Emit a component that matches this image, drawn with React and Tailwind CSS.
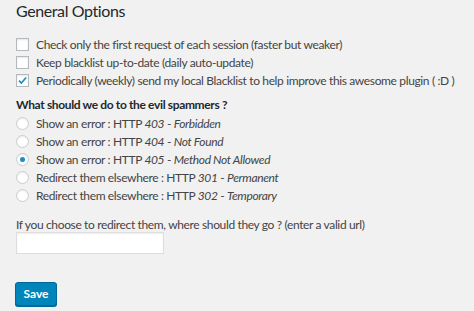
import { useState } from "react";

const checks = [
  { label: "Check only the first request of each session (faster but weaker)", on: false },
  { label: "Keep blacklist up-to-date (daily auto-update)", on: false },
  { label: "Periodically (weekly) send my local Blacklist to help improve this awesome plugin ( :D )", on: true },
];

const actions = [
  { text: "Show an error : HTTP", code: "403", desc: "Forbidden" },
  { text: "Show an error : HTTP", code: "404", desc: "Not Found" },
  { text: "Show an error : HTTP", code: "405", desc: "Method Not Allowed" },
  { text: "Redirect them elsewhere : HTTP", code: "301", desc: "Permanent" },
  { text: "Redirect them elsewhere : HTTP", code: "302", desc: "Temporary" },
];

export default function App() {
  const [picked, setPicked] = useState(2);

  return (
    <div
      className="w-[474px] h-[311px] bg-[#f1f1f1] text-[#444] px-4 overflow-hidden tracking-[-0.36px]"
      style={{ fontFamily: 'Lato, "Open Sans", sans-serif' }}
    >
      {/* Heading */}
      <h2 className="text-[16px] leading-[22px] font-normal text-[#23282d] tracking-[-0.4px]">General Options</h2>

      {/* Checkboxes */}
      <div className="mt-[16px] flex flex-col gap-[5px]">
        {checks.map((c, i) => (
          <label key={i} className="flex items-center h-[13px] text-[12px] whitespace-nowrap">
            <span className="w-[13px] h-[13px] bg-white border border-[#b4b9be] shadow-[inset_0_1px_2px_rgba(0,0,0,0.1)] flex items-center justify-center shrink-0 mr-[7px]">
              {c.on && (
                <svg viewBox="0 0 12 12" className="w-[11px] h-[11px]">
                  <path d="M2.2 6.2 L4.8 8.8 L10 2.8" fill="none" stroke="#1e8cbe" strokeWidth="1.8" />
                </svg>
              )}
            </span>
            <span>{c.label}</span>
          </label>
        ))}
      </div>

      {/* Radios */}
      <p className="mt-[10px] h-[16px] text-[12px] font-bold text-[#23282d] leading-[16px]">
        What should we do to the evil spammers ?
      </p>
      <div className="mt-[4px] flex flex-col gap-[5px]">
        {actions.map((a, i) => (
          <label
            key={i}
            onClick={() => setPicked(i)}
            className="flex items-center h-[13px] text-[12px] whitespace-nowrap"
          >
            <span className="w-[13px] h-[13px] rounded-full bg-white border border-[#c9cdd1] shadow-[inset_0_1px_2px_rgba(0,0,0,0.08)] flex items-center justify-center shrink-0 mr-[7px]">
              {picked === i && <span className="w-[5px] h-[5px] rounded-full bg-[#1e8cbe]" />}
            </span>
            <span>
              {a.text} <em>{a.code}</em> - <em>{a.desc}</em>
            </span>
          </label>
        ))}
      </div>

      {/* Redirect url */}
      <p className="mt-[16px] h-[14px] text-[12px] leading-[14px]">
        If you choose to redirect them, where should they go ? (enter a valid url)
      </p>
      <input className="block w-[148px] h-[22px] bg-white border border-[#ddd] shadow-[inset_0_1px_2px_rgba(0,0,0,0.07)] outline-none" />

      <button className="mt-[28px] ml-[-1px] h-[24px] w-[42px] bg-[#0085ba] border border-[#006799] rounded-[3px] text-white text-[12px] font-bold tracking-normal shadow-[0_1px_0_#006799]">
        Save
      </button>
    </div>
  );
}
